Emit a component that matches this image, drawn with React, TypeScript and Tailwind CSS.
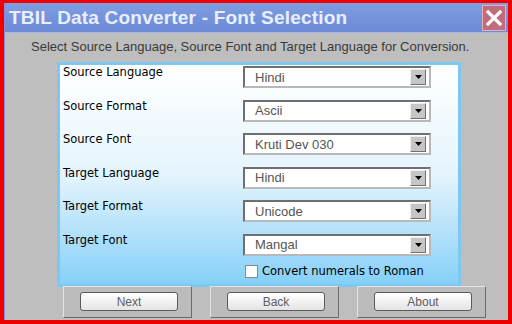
import React from "react";

const rows: [string, string][] = [
  ["Source Language", "Hindi"],
  ["Source Format", "Ascii"],
  ["Source Font", "Kruti Dev 030"],
  ["Target Language", "Hindi"],
  ["Target Format", "Unicode"],
  ["Target Font", "Mangal"],
];

function Dropdown({ value }: { value: string }) {
  return (
    <div className="w-[188px] h-[22px] flex items-center bg-white border-2 border-t-[#6f6f6f] border-l-[#6f6f6f] border-b-[#b8b8b8] border-r-[#b8b8b8] pr-[3px]">
      <div className="flex-1 pl-[10px] text-[13px] text-[#555] leading-none font-['Liberation_Sans',sans-serif]">
        {value}
      </div>
      <div className="w-[16px] h-[16px] bg-[#c6c6c6] border border-t-[#eeeeee] border-l-[#eeeeee] border-b-[#707070] border-r-[#707070] flex items-center justify-center">
        <svg width="7" height="4" viewBox="0 0 7 4">
          <polygon points="0,0 7,0 3.5,4" fill="#000" />
        </svg>
      </div>
    </div>
  );
}

function Btn({ label }: { label: string }) {
  return (
    <div className="w-[129px] h-[32px] bg-[#bcbcbc] border border-t-[#e4e4e4] border-l-[#e4e4e4] border-b-[#6a6a6a] border-r-[#6a6a6a] pl-[16px] pt-[5px]">
      <div className="w-[98px] h-[19px] rounded-[3px] border border-[#5a5a5a] bg-gradient-to-b from-white to-[#e4e4e4] flex items-center justify-center text-[12px] text-[#606060] font-['Liberation_Sans',sans-serif] leading-none">
        {label}
      </div>
    </div>
  );
}

export default function App() {
  return (
    <div className="w-[512px] h-[324px] bg-[#ee0000] pt-[3px] pl-[4px] pr-[4px] pb-[4px]">
      <div className="w-full h-full bg-[#bebebe] flex flex-col overflow-hidden border-l border-[#8a8ad8]">
        <div className="h-[30px] shrink-0 bg-gradient-to-b from-[#7f9de2] to-[#6c8ad6] border-b border-[#a8b8e0] flex items-center justify-between pl-[4px] pr-[2px]">
          <span className="text-[19px] font-bold text-[#e8f0ff] font-['Liberation_Sans',sans-serif] tracking-[0.2px] leading-none">
            TBIL Data Converter - Font Selection
          </span>
          <div className="w-[24px] h-[26px] bg-[#c06c7c] border border-[#e8b0b8] flex items-center justify-center">
            <svg width="16" height="16" viewBox="0 0 16 16">
              <path d="M2 2 L14 14 M14 2 L2 14" stroke="#fff" strokeWidth="3.2" strokeLinecap="square" />
            </svg>
          </div>
        </div>
        <div className="h-[29px] shrink-0 pl-[26px] pt-[7px] text-[13px] text-[#3a3a3a] font-['Liberation_Sans',sans-serif] leading-none">
          Select Source Language, Source Font and Target Language for Conversion.
        </div>
        <div className="ml-[52px] w-[404px] h-[225px] shrink-0 border-[3px] border-[#7cc8f0] bg-gradient-to-b from-white via-[#e4f4fc] to-[#84d0f8] pl-[3px] pt-[1px]">
          <div className="flex flex-col gap-[11.6px]">
            {rows.map(([label, value]) => (
              <div key={label} className="flex items-start h-[22px]">
                <div className="w-[180px] text-[11.5px] text-black font-['DejaVu_Sans',sans-serif] leading-none pt-[1px]">
                  {label}
                </div>
                <Dropdown value={value} />
              </div>
            ))}
          </div>
          <div className="flex items-center mt-[9px] ml-[182px]">
            <div className="w-[13px] h-[13px] bg-white border border-[#8a8a8a]" />
            <span className="ml-[4px] text-[11.5px] text-black font-['DejaVu_Sans',sans-serif] leading-none">
              Convert numerals to Roman
            </span>
          </div>
        </div>
        <div className="flex gap-[18px] ml-[58px] mt-[-1px]">
          <Btn label="Next" />
          <Btn label="Back" />
          <Btn label="About" />
        </div>
      </div>
    </div>
  );
}
